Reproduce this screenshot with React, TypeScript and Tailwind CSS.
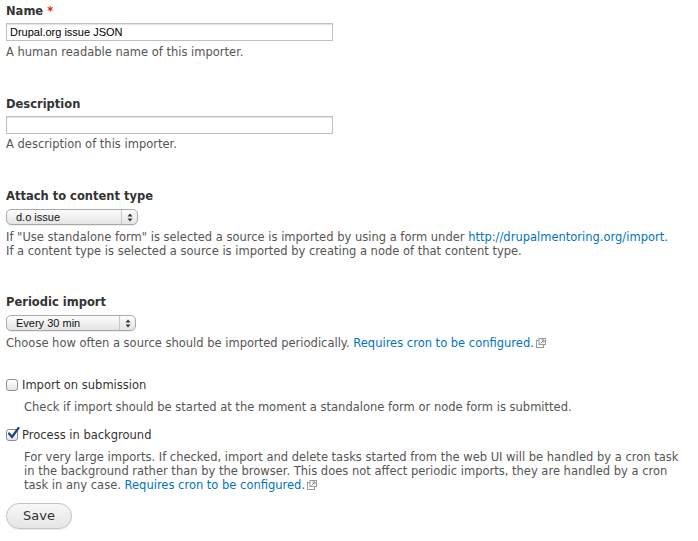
import React from 'react';

const font = { fontFamily: '"DejaVu Sans", "Lucida Grande", Verdana, sans-serif' };

function ExtIcon() {
  return (
    <svg width="10" height="10" viewBox="0 0 10 10" className="inline-block ml-[2px] align-[-1px]">
      <rect x="0.5" y="2.5" width="7" height="7" fill="none" stroke="#999" />
      <rect x="3" y="0.5" width="6.5" height="6" fill="#fff" stroke="#999" />
      <path d="M4.5 5.5 L8 2 M5.5 2 H8 V4.5" fill="none" stroke="#888" strokeWidth="1" />
    </svg>
  );
}

function FakeSelect({ value, width }: { value: string; width: string }) {
  return (
    <div
      className={`${width} h-[16px] flex items-center rounded-[5px] border border-[#a9a9a9] bg-gradient-to-b from-[#fdfdfd] to-[#e4e4e4] shadow-[0_1px_0_rgba(0,0,0,0.08)]`}
    >
      <span className="flex-1 pl-[9px] text-[11px] leading-none text-[#111]" style={{ fontFamily: '"Liberation Sans", Arial, sans-serif' }}>
        {value}
      </span>
      <span className="h-full w-[16px] border-l border-[#c8c8c8] flex items-center justify-center">
        <svg width="6" height="9" viewBox="0 0 6 9">
          <path d="M3 0.5 L5.5 3.5 H0.5 Z" fill="#333" />
          <path d="M3 8.5 L5.5 5.5 H0.5 Z" fill="#333" />
        </svg>
      </span>
    </div>
  );
}

function Checkbox({ checked }: { checked?: boolean }) {
  return (
    <span className="relative inline-block w-[12px] h-[12px] rounded-[3px] border border-[#8e8e8e] bg-gradient-to-b from-[#ffffff] to-[#e6e6e6] mr-[4px] shrink-0">
      {checked && (
        <svg width="13" height="13" viewBox="0 0 13 13" className="absolute left-[0px] top-[-3px]">
          <path d="M2 6.5 L5 10 L11.5 1" fill="none" stroke="#1f3f8f" strokeWidth="2.2" strokeLinecap="round" />
        </svg>
      )}
    </span>
  );
}

export default function App() {
  return (
    <div className="w-[698px] h-[541px] bg-white px-[6px] pt-[4px] text-[11.5px] leading-[14px] text-[#333]" style={font}>
      {/* Name */}
      <div className="font-bold text-[#333]">
        Name <span className="text-[#e62600]">*</span>
      </div>
      <div className="mt-[5px] w-[327px] h-[18px] border border-[#c0c0c0] shadow-[inset_0_1px_1px_rgba(0,0,0,0.12)] flex items-center pl-[3px] text-[11px] text-black" style={{ fontFamily: '"Liberation Sans", Arial, sans-serif' }}>
        Drupal.org issue JSON
      </div>
      <div className="mt-[4px] text-[#555]">A human readable name of this importer.</div>

      {/* Description */}
      <div className="mt-[38px] font-bold">Description</div>
      <div className="mt-[5px] w-[327px] h-[18px] border border-[#c0c0c0] shadow-[inset_0_1px_1px_rgba(0,0,0,0.12)]" />
      <div className="mt-[3px] text-[#555]">A description of this importer.</div>

      {/* Attach to content type */}
      <div className="mt-[38px] font-bold">Attach to content type</div>
      <div className="mt-[6px]">
        <FakeSelect value="d.o issue" width="w-[132px]" />
      </div>
      <div className="mt-[5px] text-[#555] whitespace-nowrap">
        If "Use standalone form" is selected a source is imported by using a form under{' '}
        <span className="text-[#0074bd]">http://drupalmentoring.org/import</span>.
        <br />
        If a content type is selected a source is imported by creating a node of that content type.
      </div>

      {/* Periodic import */}
      <div className="mt-[37px] font-bold">Periodic import</div>
      <div className="mt-[6px]">
        <FakeSelect value="Every 30 min" width="w-[130px]" />
      </div>
      <div className="mt-[5px] text-[#555] whitespace-nowrap">
        Choose how often a source should be imported periodically.{' '}
        <span className="text-[#0074bd]">Requires cron to be configured.</span>
        <ExtIcon />
      </div>

      {/* Import on submission */}
      <div className="mt-[28px] flex items-center text-[#333]">
        <Checkbox />
        <span>Import on submission</span>
      </div>
      <div className="mt-[8px] ml-[18px] text-[#555] whitespace-nowrap">
        Check if import should be started at the moment a standalone form or node form is submitted.
      </div>

      {/* Process in background */}
      <div className="mt-[14px] flex items-center text-[#333]">
        <Checkbox checked />
        <span>Process in background</span>
      </div>
      <div className="mt-[8px] ml-[18px] text-[#555] whitespace-nowrap">
        For very large imports. If checked, import and delete tasks started from the web UI will be handled by a cron task
        <br />
        in the background rather than by the browser. This does not affect periodic imports, they are handled by a cron
        <br />
        task in any case. <span className="text-[#0074bd]">Requires cron to be configured.</span>
        <ExtIcon />
      </div>

      {/* Save */}
      <button
        type="button"
        className="mt-[11px] w-[66px] h-[26px] rounded-[13px] border border-[#c4c4c4] bg-gradient-to-b from-[#f7f7f7] to-[#e5e5e5] text-[13px] text-[#333] shadow-[0_1px_1px_rgba(0,0,0,0.08)]"
        style={font}
      >
        Save
      </button>
    </div>
  );
}
